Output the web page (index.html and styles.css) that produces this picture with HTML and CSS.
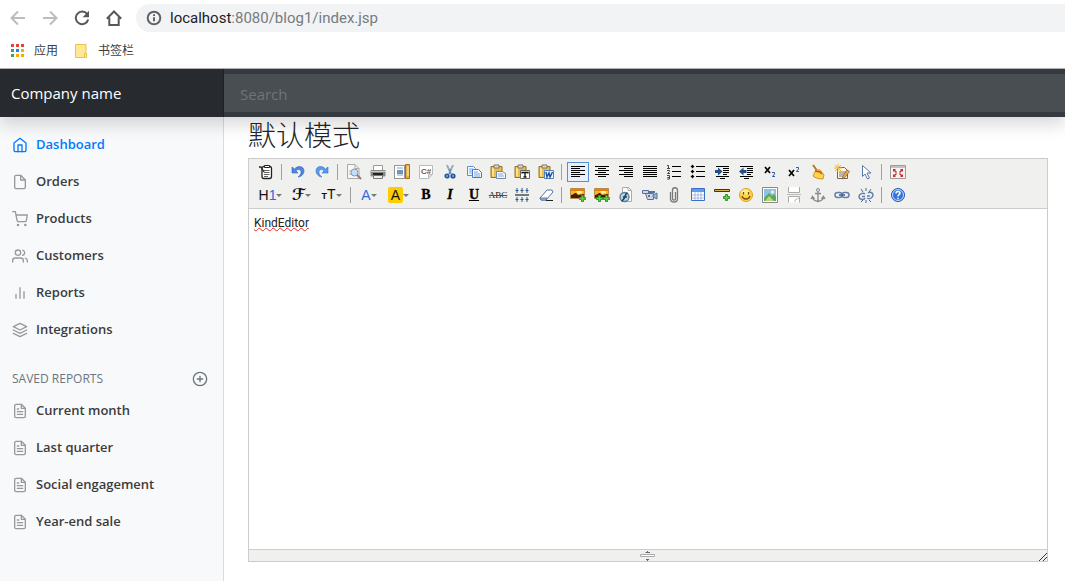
FILE: index.html
```html
<!DOCTYPE html>
<html lang="zh-CN">
<head>
<meta charset="utf-8">
<meta name="viewport" content="width=device-width, initial-scale=1">
<title>Dashboard</title>
<link rel="stylesheet" href="styles.css">
</head>
<body>
<svg class="defs" aria-hidden="true">
  <symbol id="file-text" viewBox="0 0 24 24"><path d="M14 2H6a2 2 0 0 0-2 2v16a2 2 0 0 0 2 2h12a2 2 0 0 0 2-2V8z"/><path d="M14 2v6h6M16 13H8M16 17H8M10 9H8"/></symbol>
  <symbol id="clip" viewBox="0 0 16 16"><path d="M1 2.500h11v11H1z" fill="#e9bd49" stroke="#9a711d"/><path d="M2 3.500h2v9H2z" fill="#fbe18b"/><path d="M4 1h5v3H4z" fill="#ddd" stroke="#777"/></symbol>
  <symbol id="photo" viewBox="0 0 16 16"><path d="M.5 1.500h14v10H.5z" fill="#ffb51b" stroke="#b98b4e"/><path d="M1 2h13v2H1z" fill="#e77f08"/><path d="M1 8c2 0 3-2 5-2l2 2 6-1v4H1z" fill="#3b210d"/><path d="M6 4h6v2l-4 1z" fill="#fff2a2"/></symbol>
  <symbol id="plus-g" viewBox="0 0 7 7"><path d="M2.500.5h2v2h2v2h-2v2h-2v-2h-2v-2h2z" fill="#62d14c" stroke="#2c942b"/></symbol>
</svg>

<header class="browser">
  <div class="address-row">
    <button class="chrome-btn off" aria-label="Back"><svg viewBox="0 0 16 16"><path d="M15 8H2M8 1.500 1.500 8 8 14.500"/></svg></button>
    <button class="chrome-btn off" aria-label="Forward"><svg viewBox="0 0 16 16"><path d="M1 8h13M8 1.500 14.500 8 8 14.500"/></svg></button>
    <button class="chrome-btn" aria-label="Reload"><svg viewBox="0 0 16 16"><path d="M13.200 4.200A6.300 6.300 0 1 0 14.200 9.500"/><path d="M15 .8v6.400H8.600z" fill="#55585c" stroke="none"/></svg></button>
    <button class="chrome-btn" aria-label="Home"><svg viewBox="0 0 16 16"><path d="M.8 8.700 8 1.500l7.200 7.200M3.300 7.500v7.500h9.400V7.500"/></svg></button>
    <div class="omnibox">
      <svg class="info" viewBox="0 0 16 16"><circle cx="8" cy="8" r="6.300"/><path d="M8 7.200v4M8 4.300v1.600"/></svg>
      <span class="url">localhost<span class="path">:8080/blog1/index.jsp</span></span>
    </div>
  </div>
  <nav class="bookmarks" aria-label="Bookmarks">
    <a href="#"><svg class="apps" viewBox="0 0 13 13"><path fill="#ea4335" d="M0 0h3v3H0zM5 0h3v3H5zM10 0h3v3h-3z"/><path fill="#34a853" d="M0 5h3v3H0zM0 10h3v3H0z"/><path fill="#1a86e8" d="M5 5h3v3H5z"/><path fill="#f9ab00" d="M10 5h3v3h-3zM5 10h3v3H5zM10 10h3v3h-3z"/></svg>应用</a>
    <a href="#"><svg class="folder" viewBox="0 0 13 14"><path d="M.5.500h10.500v13H.5z" fill="#ffe793" stroke="#e8c44b"/><path d="M9.500 9.500h2v4h-2z" fill="#ffe793" stroke="#e8c44b"/></svg>书签栏</a>
  </nav>
</header>

<div class="topbar">
  <a class="brand" href="#">Company name</a>
  <input class="search" type="text" placeholder="Search" aria-label="Search">
</div>

<div class="layout">
  <nav class="sidebar">
    <ul>
      <li><a class="active" href="#"><svg viewBox="0 0 24 24"><path d="M3 9l9-7 9 7v11a2 2 0 0 1-2 2H5a2 2 0 0 1-2-2z"/><path d="M9 22V12h6v10"/></svg>Dashboard</a></li>
      <li><a href="#"><svg viewBox="0 0 24 24"><path d="M13 2H6a2 2 0 0 0-2 2v16a2 2 0 0 0 2 2h12a2 2 0 0 0 2-2V9z"/><path d="M13 2v7h7"/></svg>Orders</a></li>
      <li><a href="#"><svg viewBox="0 0 24 24"><circle cx="9" cy="21" r="1"/><circle cx="20" cy="21" r="1"/><path d="M1 1h4l2.680 13.390a2 2 0 0 0 2 1.610h9.720a2 2 0 0 0 2-1.610L23 6H6"/></svg>Products</a></li>
      <li><a href="#"><svg viewBox="0 0 24 24"><path d="M17 21v-2a4 4 0 0 0-4-4H5a4 4 0 0 0-4 4v2"/><circle cx="9" cy="7" r="4"/><path d="M23 21v-2a4 4 0 0 0-3-3.870M16 3.130a4 4 0 0 1 0 7.750"/></svg>Customers</a></li>
      <li><a href="#"><svg viewBox="0 0 24 24"><path d="M18 20V10M12 20V4M6 20v-6"/></svg>Reports</a></li>
      <li><a href="#"><svg viewBox="0 0 24 24"><path d="M12 2 2 7l10 5 10-5zM2 17l10 5 10-5M2 12l10 5 10-5"/></svg>Integrations</a></li>
    </ul>
    <h2 class="side-title"><span>SAVED REPORTS</span><button aria-label="Add report"><svg viewBox="0 0 24 24"><circle cx="12" cy="12" r="10"/><path d="M12 8v8M8 12h8"/></svg></button></h2>
    <ul>
      <li><a href="#"><svg><use href="#file-text"/></svg>Current month</a></li>
      <li><a href="#"><svg><use href="#file-text"/></svg>Last quarter</a></li>
      <li><a href="#"><svg><use href="#file-text"/></svg>Social engagement</a></li>
      <li><a href="#"><svg><use href="#file-text"/></svg>Year-end sale</a></li>
    </ul>
  </nav>

  <main class="main">
    <h1>默认模式</h1>
    <section class="editor">
      <div class="toolbar" role="toolbar" aria-label="Editor">
        <div class="tools">
          <button aria-label="HTML source"><svg viewBox="0 0 16 16"><rect x="4" y="2.500" width="9.500" height="12" rx="2" fill="#fff" stroke="#222" stroke-width="1.300"/><path d="M6.500 1.500h5v2h-5z" fill="#fff" stroke="#222"/><path d="M6 6.500h5.500M6 8.500h5.500M6 10.500h5.500M6 12.500h4" stroke="#666"/><path d="M1 3h2l3 5" fill="none" stroke="#222" stroke-width="1.300"/></svg></button>
          <i class="sep"></i>
          <button aria-label="Undo"><svg viewBox="0 0 16 16"><path d="M2 3v6h6L6 7c2-3 6-1 5 2-.5 2-2 3-3 4 3 0 6-3 6-6C14 2 8 1 4.500 5z" fill="#4d85e0" stroke="#2f62bd" stroke-width=".6"/></svg></button>
          <button aria-label="Redo"><svg viewBox="0 0 16 16"><path d="M14 3v6H8l2-2C8 4 4 6 5 9c.5 2 2 3 3 4-3 0-6-3-6-6 0-5 6-6 9.500-2z" fill="#5b9bea" stroke="#2f6ecb" stroke-width=".6"/></svg></button>
          <i class="sep"></i>
          <button aria-label="Preview"><svg viewBox="0 0 16 16"><path d="M1.500.5H9l4 4v10H1.500z" fill="#f7f7f7" stroke="#aaa"/><path d="M9 .5v4h4M3 7h3M3 10h2" fill="none" stroke="#aaa"/><circle cx="8.500" cy="8.500" r="3.500" fill="#c7def8" stroke="#6d9bcf"/><path d="m11 11 4 4" stroke="#967b75" stroke-width="2"/></svg></button>
          <button aria-label="Print"><svg viewBox="0 0 16 16"><path d="M3.500 1.500h9v5h-9z" fill="#fff" stroke="#999"/><rect x=".5" y="6" width="15" height="6.500" rx="1" fill="#888"/><path d="M1 7h14v1H1z" fill="#ccc"/><path d="M3 9h10v2H3z" fill="#222"/><path d="M3.500 11.500h9v3h-9z" fill="#eee" stroke="#777"/></svg></button>
          <button aria-label="Template"><svg viewBox="0 0 16 16"><path d="M.5 1.500h10v13H.5z" fill="#fff" stroke="#333" stroke-dasharray="1 1"/><path d="M3 4h6M3 11h6" stroke="#999"/><path d="M3 6h6v4H3z" fill="#6597ce"/><path d="M11.500.5h4v14h-4z" fill="#e7ac4c" stroke="#ad6c18"/><path d="M13 3h2M13 5h2M13 7h2M13 9h2M13 11h2" stroke="#fff2b0"/></svg></button>
          <button aria-label="Insert code"><svg viewBox="0 0 16 16"><path d="M1.500 1.500h13v9l-4 4h-9z" fill="#fff" stroke="#bbb"/><path d="M14 10.500h-3.500V14" fill="#ddd" stroke="#bbb"/><text x="3" y="10" class="t-code">C#</text></svg></button>
          <button aria-label="Cut"><svg viewBox="0 0 16 16"><path d="m5 1 4 9M11 1 7 10" stroke="#7590b0" stroke-width="1.800"/><path d="m5 1 2 4M11 1 9 5" stroke="#a9bad0"/><circle cx="5" cy="12" r="1.700" fill="none" stroke="#1f55a8" stroke-width="1.800"/><circle cx="11" cy="12" r="1.700" fill="none" stroke="#1f55a8" stroke-width="1.800"/></svg></button>
          <button aria-label="Copy"><svg viewBox="0 0 16 16"><path d="M1.500 2.500h6l2 2v7h-8z" fill="#f5faff" stroke="#5e8edb"/><path d="M3 5h4M3 7h5M3 9h4" stroke="#7ba6e5"/><path d="M6.500 5.500h6l3 3v5h-9z" fill="#f5faff" stroke="#4479d0"/><path d="M8 8h4M8 10h6M8 12h6" stroke="#7ba6e5"/></svg></button>
          <button aria-label="Paste"><svg viewBox="0 0 16 16"><use href="#clip"/><path d="M6.500 7.500h6l3 2v5h-9z" fill="#f3f7fc" stroke="#6e88ad"/><path d="M8 10h5M8 12h6" stroke="#8ba8d0"/></svg></button>
          <button aria-label="Paste as text"><svg viewBox="0 0 16 16"><use href="#clip"/><path d="M6.500 6.500h9v8h-9z" fill="#fff" stroke="#666"/><path d="M8 9.500V8.500h6v1M11 8v5M9.500 13h3" fill="none" stroke="#111" stroke-width="1.300"/></svg></button>
          <button aria-label="Paste from Word"><svg viewBox="0 0 16 16"><use href="#clip"/><path d="M6.500 6.500h9v8h-9z" fill="#eff6ff" stroke="#5981ba"/><path d="m8 8 1 5 2-4 1 4 2.500-5" fill="none" stroke="#1b57a8" stroke-width="1.500"/></svg></button>
          <i class="sep"></i>
          <button class="on" aria-label="Align left"><svg viewBox="0 0 16 16"><path class="k" d="M1 2.500h14M1 4.500h9M1 6.500h14M1 8.500h9M1 10.500h14M1 12.500h9"/></svg></button>
          <button aria-label="Align center"><svg viewBox="0 0 16 16"><path class="k" d="M1 2.500h14M4 4.500h8M1 6.500h14M4 8.500h8M1 10.500h14M4 12.500h8"/></svg></button>
          <button aria-label="Align right"><svg viewBox="0 0 16 16"><path class="k" d="M1 2.500h14M6 4.500h9M1 6.500h14M6 8.500h9M1 10.500h14M6 12.500h9"/></svg></button>
          <button aria-label="Justify"><svg viewBox="0 0 16 16"><path class="k" d="M1 2.500h14M1 4.500h14M1 6.500h14M1 8.500h14M1 10.500h14M1 12.500h14"/></svg></button>
          <button aria-label="Numbered list"><svg viewBox="0 0 16 16"><path class="k" d="M6 2.500h9M6 7.500h9M6 12.500h9"/><path class="k thin" d="M1 1.500h1.500v3M1 4.500h3M1 6.500h2.500v1L1.500 9.500h2.500M1 11.500h2.500v3.500H1M1.500 13.500h2"/></svg></button>
          <button aria-label="Bullet list"><svg viewBox="0 0 16 16"><path class="k" d="M6 2.500h9M6 7.500h9M6 12.500h9"/><path d="M2 1h1v1h1v1H3v1H2V3H1V2h1zM2 6h1v1h1v1H3v1H2V8H1V7h1zM2 11h1v1h1v1H3v1H2v-1H1v-1h1z" stroke="#000" stroke-width=".4"/></svg></button>
          <button aria-label="Indent"><svg viewBox="0 0 16 16"><path class="k" d="M2 2.500h13M9 4.500h6M9 6.500h6M9 8.500h6M9 10.500h4M2 12.500h13M6 14.500h5"/><path d="M1 6h3V3.500L8.500 7.500 4 11.500V9H1z" fill="#214f88"/></svg></button>
          <button aria-label="Outdent"><svg viewBox="0 0 16 16"><path class="k" d="M2 2.500h13M9 4.500h6M9 6.500h6M9 8.500h6M9 10.500h4M2 12.500h13M6 14.500h5"/><path d="M8.500 6h-3V3.500L1 7.500l4.500 4V9h3z" fill="#214f88"/></svg></button>
          <button aria-label="Subscript"><svg viewBox="0 0 16 16"><path d="m3 3 5 6M8 3 3 9" stroke="#000" stroke-width="1.700"/><path d="M10 8.500h2.500V10L10.500 12.500H13" fill="none" stroke="#315caa"/></svg></button>
          <button aria-label="Superscript"><svg viewBox="0 0 16 16"><path d="m3 6 5 6M8 6 3 12" stroke="#000" stroke-width="1.700"/><path d="M10 3.500h2.500V5L10.500 7.500H13" fill="none" stroke="#315caa"/></svg></button>
          <button aria-label="Clear formatting"><svg viewBox="0 0 16 16"><path d="m3 1 5 7" stroke="#b97917" stroke-width="2"/><path d="m6 6-3 6c2 2 6 3 10 3l1-4-4-5z" fill="#ffd44d" stroke="#cf961b"/><path d="m5 7 5 1 2 2" fill="none" stroke="#d24b28" stroke-width="1.500"/></svg></button>
          <button aria-label="Quick format"><svg viewBox="0 0 16 16"><path d="M3.500 3.500h7l3 3v8h-10z" fill="#fff8dc" stroke="#666"/><path d="M5 8h7M5 10h6M5 12h4" stroke="#777"/><path d="M4 0v8M0 4h8M1 1l6 6M7 1 1 7" stroke="#efb52c"/><path d="m9 12 4-6 2.500 1.500-4.500 6-3 1.500z" fill="#f1aa51" stroke="#855628" stroke-width=".7"/></svg></button>
          <button aria-label="Select all"><svg viewBox="0 0 16 16"><path d="M4.500 1.500v11L7 10l2.500 5 2-1L9 9h4z" fill="#fff" stroke="#587ba7"/></svg></button>
          <i class="sep"></i>
          <button aria-label="Full screen"><svg viewBox="0 0 16 16"><path d="M.5 1.500h15v13H.5z" fill="#f5f3f3" stroke="#a2999a"/><path d="M1 2h14v2H1z" fill="#ccbcbd"/><path d="M3 5h3L5 6l2 2-1 1-2-2-1 1zM13 5h-3l1 1-2 2 1 1 2-2 1 1zM3 13h3l-1-1 2-2-1-1-2 2-1-1zM13 13h-3l1-1-2-2 1-1 2 2 1-1z" fill="#c92a2a"/></svg></button>
        </div>
        <div class="tools">
          <button class="w25" aria-label="Paragraph format"><span class="glyph">H<b>1</b></span><i class="caret"></i></button>
          <button class="w21" aria-label="Font family"><span class="glyph script">ℱ</span><i class="caret"></i></button>
          <button class="w23" aria-label="Font size"><span class="glyph"><small>T</small>T</span><i class="caret"></i></button>
          <i class="sep"></i>
          <button class="w20" aria-label="Text color"><span class="glyph blue">A</span><i class="caret"></i></button>
          <button class="w23" aria-label="Highlight color"><span class="glyph mark">A</span><i class="caret"></i></button>
          <button aria-label="Bold"><span class="letter">B</span></button>
          <button aria-label="Italic"><span class="letter italic">I</span></button>
          <button aria-label="Underline"><span class="letter under">U</span></button>
          <button aria-label="Strikethrough"><span class="abc">ABC</span></button>
          <button aria-label="Line height"><svg viewBox="0 0 16 16"><path d="M1 7h14v2H1z" fill="#777"/><path d="M3 1v5M8 1v5M13 1v5M3 10v5M8 10v5M13 10v5M1.500 3.500h3M6.500 3.500h3M11.500 3.500h3M1.500 12.500h3M6.500 12.500h3M11.500 12.500h3" stroke="#2c588c"/></svg></button>
          <button aria-label="Remove format"><svg viewBox="0 0 16 16"><path d="m2 11 7-8h5l1 2-7 8H3z" fill="#fff" stroke="#5876a5"/><path d="m2 11 1 2h5l1-2z" fill="#aac4eb" stroke="#5876a5"/><path d="M8 13.500h7" stroke="#222"/></svg></button>
          <i class="sep"></i>
          <button aria-label="Image"><svg viewBox="0 0 16 16"><use href="#photo"/><use href="#plus-g" x="9" y="8" width="7" height="7"/></svg></button>
          <button aria-label="Multiple images"><svg viewBox="0 0 16 16"><use href="#photo"/><use href="#plus-g" x="2" y="8" width="7" height="7"/><use href="#plus-g" x="9" y="8" width="7" height="7"/></svg></button>
          <button aria-label="Flash"><svg viewBox="0 0 16 16"><path d="M4.500.5h6l3 3v11h-9z" fill="#fff" stroke="#aaa"/><path d="M10 .5v3h3" fill="none" stroke="#aaa"/><circle cx="6.500" cy="10" r="4.500" fill="#bdd2df" stroke="#5b7c93" stroke-width="1.300"/><path d="M9.500 6c-3 0-2 7-6 8M5 10h4" fill="none" stroke="#164468" stroke-width="1.500"/></svg></button>
          <button aria-label="Video"><svg viewBox="0 0 16 16"><path d="M.5 3.500h6v3h-6zM3.500 6.500h8v6h-6z" fill="#c8d9ee" stroke="#56749a"/><path d="m11 8 4-2v6l-4-2z" fill="#99b4d7" stroke="#56749a"/><path d="M6 5h7" stroke="#56749a" stroke-width="2"/><path d="M6 8h2v2H6z" fill="#b85454"/></svg></button>
          <button aria-label="Attachment"><svg viewBox="0 0 16 16"><path d="M4.500 5v7c0 4 7 4 7 0V3c0-3-5-3-5 0v9c0 1.500 3 1.500 3 0V5" fill="none" stroke="#777" stroke-width="1.300"/></svg></button>
          <button aria-label="Table"><svg viewBox="0 0 16 16"><path d="M1.500 1.500h13v12h-13z" fill="#fff" stroke="#396fc5"/><path d="M2 2h12v3H2z" fill="#659aed"/><path d="M2 8h12M2 11h12M5 5v8M8 5v8M11 5v8" stroke="#a3bbe0"/></svg></button>
          <button aria-label="Horizontal rule"><svg viewBox="0 0 16 16"><path d="M.5 2.500h15v2H.5z" fill="#ddb24a" stroke="#4c2d15"/><use href="#plus-g" x="9" y="7" width="7" height="7"/></svg></button>
          <button aria-label="Emoticons"><svg viewBox="0 0 16 16"><circle cx="8" cy="8" r="6.500" fill="#ffd345" stroke="#dfa21a"/><ellipse cx="7" cy="5" rx="4" ry="2.500" fill="#ffec95"/><path d="M5.500 5v2.500M10.500 5v2.500M4 9c1 4 7 4 8 0" fill="none" stroke="#754d0d" stroke-width="1.300"/></svg></button>
          <button aria-label="Map"><svg viewBox="0 0 16 16"><path d="M.5.500h15v15H.5z" fill="#fff" stroke="#888"/><path d="M2 2h12v12H2z" fill="#8bc3e9"/><path d="m2 11 5-5 3 3 2-2 2 3v4H2z" fill="#5fa956"/><path d="m3 14 4-5 5 5z" fill="#b6d77b"/><circle cx="10.500" cy="5" r="1.500" fill="#fff8ae"/></svg></button>
          <button aria-label="Page break"><svg viewBox="0 0 16 16"><path d="M2.500 0v5.500h11V0M2.500 15.500v-6h11v6" fill="#fff" stroke="#aaa"/><path d="M1 7.500h14" stroke="#bbb"/><path d="M9 15v-2l4-2" fill="none" stroke="#bbb"/></svg></button>
          <button aria-label="Anchor"><svg viewBox="0 0 16 16"><circle cx="8" cy="3" r="1.500" fill="none" stroke="#888"/><path d="M8 5v10M5 6.500h6M2.500 10c0 3 3 4 5.500 4.500 2.500-.5 5.500-1.500 5.500-4.500M1 12l1.500-2.500L4.500 12M11.500 12l2-2.500L15 12" fill="none" stroke="#888" stroke-width="1.300"/></svg></button>
          <button aria-label="Link"><svg viewBox="0 0 16 16"><rect x="1" y="5.500" width="7" height="5" rx="2.500" fill="none" stroke="#6680ab" stroke-width="1.500"/><rect x="8" y="5.500" width="7" height="5" rx="2.500" fill="none" stroke="#6680ab" stroke-width="1.500"/><path d="M5 8h6" stroke="#405e8f" stroke-width="1.500"/></svg></button>
          <button aria-label="Unlink"><svg viewBox="0 0 16 16"><path d="M7 7c-2-2-6 0-6 2.500S5 14 7 11M9 11c3 2 6-1 6-3s-3-4-5-2M4 9.500h3M9 9h3" fill="none" stroke="#6680ab" stroke-width="1.500"/><path d="M8 1v3M3 2l2 3M13 2l-2 3M8 13v3M3 15l2-2M13 15l-2-2" stroke="#496b8b"/></svg></button>
          <i class="sep"></i>
          <button aria-label="About"><svg viewBox="0 0 16 16"><circle cx="8" cy="8" r="6.500" fill="#3473db" stroke="#2458b3"/><circle cx="8" cy="8" r="5.500" fill="none" stroke="#c8dcfb"/><path d="M6 6.500c0-3 4-2.500 4-.3C10 7.500 8 7.500 8 9.500M8 10.700v1.500" fill="none" stroke="#fff" stroke-width="1.500"/></svg></button>
        </div>
      </div>
      <div class="edit" contenteditable="true" role="textbox" aria-label="Content" aria-multiline="true" spellcheck="false"><span class="misspelled">KindEditor</span></div>
      <div class="status">
        <svg class="drag" viewBox="0 0 16 10"><path d="M5 2h5V1H8V0H7v1H6zM6 8h3v1H8v1H7V9H6z" fill="#666"/><path d="M.5 3.500h14v2H.5z" fill="#fff" stroke="#aaa"/></svg>
        <svg class="corner" viewBox="0 0 8 8"><path d="M0 8 8 0M4 8l4-4" stroke="#333"/></svg>
      </div>
    </section>
  </main>
</div>
</body>
</html>
```

FILE: styles.css
```css
* { box-sizing: border-box; }
body {
  margin: 0;
  min-height: 100vh;
  display: flex;
  flex-direction: column;
  background: #fff;
  color: #212529;
  font: 16px/24px "Open Sans", "Noto Sans CJK SC", sans-serif;
}
button { padding: 0; border: 0; background: none; color: inherit; font: inherit; }
a { color: inherit; text-decoration: none; }
ul { list-style: none; margin: 0; padding: 0; }
svg { display: block; flex: none; }
.defs { position: absolute; width: 0; height: 0; }

.browser { border-bottom: 1px solid #b5b5b5; }
.address-row { display: flex; align-items: center; gap: 16px; padding: 4px 0 0 10px; }
.chrome-btn svg { width: 16px; height: 16px; fill: none; stroke: #55585c; stroke-width: 2; }
.chrome-btn.off svg { stroke: #bbbcbe; }
.omnibox {
  flex: 1;
  display: flex;
  align-items: center;
  gap: 8px;
  height: 28px;
  margin-left: -2px;
  padding-left: 10px;
  border-radius: 14px 0 0 14px;
  background: #f1f3f4;
}
.info { width: 16px; height: 16px; fill: none; stroke: #5f6368; stroke-width: 2; }
.url { font-family: Roboto, sans-serif; font-size: 15px; color: #202124; }
.path { color: #777b80; }
.bookmarks {
  display: flex;
  gap: 17px;
  height: 36px;
  padding: 1px 0 0 11px;
  font-size: 12px;
  color: #3c4043;
}
.bookmarks a { display: flex; align-items: center; gap: 10px; }
.apps { width: 13px; height: 13px; }
.folder { width: 13px; height: 14px; }

.topbar {
  position: relative;
  z-index: 1;
  display: flex;
  height: 48px;
  background: #343a40;
  box-shadow: 0 8px 16px rgba(0, 0, 0, .15);
}
.brand {
  width: 224px;
  padding: 12px 11px;
  border-right: 1px solid #1d2024;
  background: #272b30;
  color: #fff;
  font-size: 15px;
}
.search {
  flex: 1;
  min-width: 0;
  margin: 5px 0;
  padding: 1px 16px 0;
  border: 0;
  background: #484e52;
  color: #fff;
  font: inherit;
  font-size: 15px;
}
.search::placeholder { color: #6c757d; opacity: 1; }

.layout { flex: 1; display: flex; }
.sidebar {
  width: 224px;
  flex: none;
  padding-top: 9px;
  border-right: 1px solid #d9dbde;
  background: #f8f9fb;
}
.sidebar svg { width: 16px; height: 16px; fill: none; stroke: #999; stroke-width: 2; stroke-linecap: round; stroke-linejoin: round; }
.sidebar li a {
  display: flex;
  align-items: center;
  gap: 8px;
  padding: 8px 12px;
  color: #3c3c3c;
  font-size: 13px;
  line-height: 21px;
  font-weight: 600;
}
.sidebar li a.active { color: #007bff; }
.sidebar li a.active svg { stroke: currentColor; }
.side-title {
  display: flex;
  align-items: center;
  justify-content: space-between;
  margin: 23px 0 5px;
  padding: 0 15px 0 12px;
  color: #6c757d;
  font-size: 12px;
  line-height: 16px;
  font-weight: 500;
}
.side-title svg { stroke: #6c757d; }

.main { flex: 1; min-width: 0; padding: 0 17px 19px 24px; }
.main h1 { margin: 0 0 5px; font-size: 28px; line-height: 36px; font-weight: 300; }
.editor { border: 1px solid #ccc; background: #fff; }
.toolbar {
  padding: 2px 5px 1px;
  border-bottom: 1px solid #ccc;
  background: #f0f0ee;
}
.tools { display: flex; flex-wrap: wrap; }
.tools button {
  display: flex;
  align-items: center;
  justify-content: center;
  width: 22px;
  height: 20px;
  margin: 1px 1px 2px;
  border: 1px solid transparent;
}
.tools button.on { border-color: #5690d2; background: #e9effa; }
.tools svg { width: 16px; height: 16px; }
.tools .w25 { width: 31px; }
.tools .w21 { width: 27px; }
.tools .w23 { width: 29px; }
.tools .w20 { width: 26px; }
.k { fill: none; stroke: #000; }
.k.thin { stroke: #444; }
.t-code { font: bold 8px "Liberation Sans", sans-serif; fill: #80551d; }
.sep { width: 1px; height: 16px; margin: 3px 4px 0 3px; background: #a0a0a0; }
.caret { border: 3px solid transparent; border-top-color: #777; border-bottom: 0; }
.glyph { color: #111; font: 14px/16px "Liberation Sans", sans-serif; }
.glyph b { color: #2b6be4; font-weight: 400; }
.glyph small { font-size: 9px; font-weight: 700; }
.script { font-family: "DejaVu Sans", sans-serif; font-size: 16px; font-weight: 700; }
.blue { color: #2b6be4; }
.mark { width: 15px; border-radius: 2px; background: #fc0; text-align: center; }
.letter { color: #000; font: bold 14px/16px "Liberation Serif", serif; -webkit-text-stroke: 1px #000; -webkit-text-stroke-width: thin; }
.italic { font-style: italic; }
.under { text-decoration: underline; }
.abc { color: #111; font: 9px/16px "Liberation Serif", serif; text-decoration: line-through #2c588c; }
.edit { min-height: 340px; padding: 5px; font: 12px/18px Roboto, sans-serif; outline: 0; color: #222; }
.misspelled { text-decoration: underline wavy #e22 1px; text-underline-offset: 0; }
.status {
  position: relative;
  display: flex;
  justify-content: center;
  height: 12px;
  padding-top: 1px;
  border-top: 1px solid #ccc;
  background: #f0f0ee;
}
.drag { width: 16px; height: 10px; }
.corner { position: absolute; right: 0; bottom: 0; width: 8px; height: 8px; }
```
